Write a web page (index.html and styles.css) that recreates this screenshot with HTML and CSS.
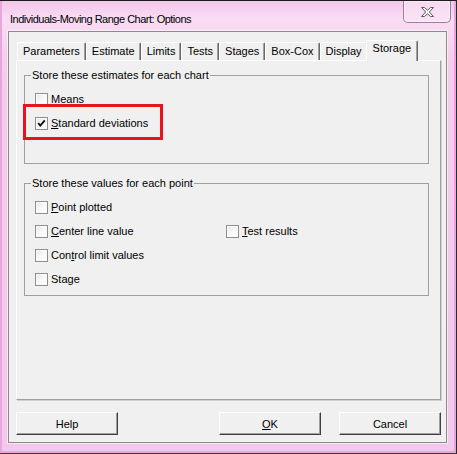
FILE: index.html
```html
<!DOCTYPE html>
<html>
<head>
<meta charset="utf-8">
<title>Individuals-Moving Range Chart: Options</title>
<link rel="stylesheet" href="styles.css">
</head>
<body>
<div class="window">
  <div class="titlebar">
    <div class="title">Individuals-Moving Range Chart: Options</div>
    <div class="close">
      <svg width="15" height="12" viewBox="0 0 15 12"><polygon points="1.5,1.5 4.5,1.5 7.5,4.2 10.5,1.5 13.5,1.5 9.3,6 13.5,10.5 10.5,10.5 7.5,7.8 4.5,10.5 1.5,10.5 5.7,6" fill="#f4f4f4" stroke="#5a5a5a" stroke-width="1" stroke-linejoin="round"/></svg>
    </div>
  </div>
  <div class="client">
    <div class="tabs">
      <div class="tab">Parameters</div>
      <div class="tab">Estimate</div>
      <div class="tab">Limits</div>
      <div class="tab">Tests</div>
      <div class="tab">Stages</div>
      <div class="tab">Box-Cox</div>
      <div class="tab">Display</div>
      <div class="tab active">Storage</div>
    </div>
    <div class="panel">
      <fieldset class="group group-chart">
        <legend>Store these estimates for each chart</legend>
        <div class="rows">
          <div class="cb"><span class="box"></span><span>Means</span></div>
          <div class="cb"><span class="box"><svg width="11" height="11" viewBox="0 0 11 11"><path d="M2.2 5.2 L4.3 7.6 L8.8 2.4" fill="none" stroke="#111" stroke-width="1.9"/></svg></span><span><u>S</u>tandard deviations</span></div>
          <div class="highlight"></div>
        </div>
      </fieldset>
      <fieldset class="group group-point">
        <legend>Store these values for each point</legend>
        <div class="grid">
          <div class="cb test"><span class="box"></span><span><u>T</u>est results</span></div>
          <div class="cb col1"><span class="box"></span><span><u>P</u>oint plotted</span></div>
          <div class="cb col1"><span class="box"></span><span><u>C</u>enter line value</span></div>
          <div class="cb col1"><span class="box"></span><span>Con<u>t</u>rol limit values</span></div>
          <div class="cb col1"><span class="box"></span><span>Sta<u>g</u>e</span></div>
        </div>
      </fieldset>
    </div>
    <div class="buttons">
      <button class="btn">Help</button>
      <div class="spacer"></div>
      <button class="btn"><u>O</u>K</button>
      <button class="btn">Cancel</button>
    </div>
  </div>
</div>
</body>
</html>
```

FILE: styles.css
```css
html, body {
  margin: 0;
  padding: 0;
  background: #ffffff;
}

body {
  font-family: "Liberation Sans", Arial, sans-serif;
  font-size: 11px;
  color: #000;
}

.window {
  box-sizing: border-box;
  width: 457px;
  height: 454px;
  padding: 0 9px 10px 8px;
  border-top: 1px solid #1c1c1c;
  border-right: 1px solid #2a2a2a;
  border-bottom: 1px solid #3a3a3a;
  background: linear-gradient(180deg, #f3c6eb 0px, #f9dcf4 18px, #f5ccee 60px, #f4c7ec 100%);
  box-shadow: inset 2px 0 0 #eaa5dc, inset -2px 0 0 #eaa5dc, inset 0 -2px 0 #eaa5dc;
  display: flex;
  flex-direction: column;
}

.titlebar {
  height: 30px;
  display: flex;
  justify-content: space-between;
  align-items: flex-start;
}

.title {
  margin-top: 11px;
  margin-left: 2px;
  line-height: 14px;
  letter-spacing: -0.5px;
  color: #000;
}

.close {
  box-sizing: border-box;
  width: 48px;
  height: 22px;
  margin-right: -4px;
  border: 1px solid #9b7f97;
  border-top: none;
  border-radius: 0 0 5px 5px;
  background: linear-gradient(180deg, rgba(255,255,255,0.35), rgba(255,255,255,0.15));
  box-shadow: inset 0 0 0 1px rgba(255,255,255,0.45);
  display: flex;
  align-items: center;
  justify-content: center;
}

.client {
  flex: 1;
  box-sizing: border-box;
  background: #f0f0f0;
  border: 1px solid #8a8a8a;
  box-shadow: 0 0 0 1px rgba(255,255,255,0.55);
  padding: 8px 5px 7px 7px;
  display: flex;
  flex-direction: column;
}

.tabs {
  display: flex;
  align-items: flex-end;
  height: 21px;
  margin-left: 1px;
  margin-bottom: -1px;
  position: relative;
  z-index: 1;
}

.tab {
  box-sizing: border-box;
  height: 18px;
  padding: 0 5px;
  line-height: 16px;
  border: 1px solid;
  border-bottom: none;
  border-color: #ffffff #696969 transparent #ffffff;
  border-radius: 2px 2px 0 0;
  box-shadow: inset -1px 0 0 #a0a0a0;
  background: #f0f0f0;
  margin-bottom: 1px;
  white-space: nowrap;
}

.tab.active {
  height: 21px;
  margin: 0 -2px 0 -2px;
  padding: 0 6px;
  line-height: 15px;
  position: relative;
  z-index: 2;
}

.panel {
  flex: 1;
  box-sizing: border-box;
  border: 1px solid;
  border-color: #ffffff #a0a0a0 #a0a0a0 #ffffff;
  box-shadow: 1px 1px 0 #d0d0d0;
  display: flex;
  flex-direction: column;
}

.group {
  margin: 8px 11px 0 7px;
  padding: 0 10px;
  border: 1px solid #a0a0a0;
  min-width: 0;
}

.group legend {
  margin-left: -4px;
  padding: 0 1px;
  line-height: 13px;
}

.group-chart {
  padding-top: 5px;
  padding-bottom: 28px;
}

.group-point {
  margin-top: 13px;
  padding-top: 5px;
  padding-bottom: 4px;
}

.rows {
  position: relative;
  display: flex;
  flex-direction: column;
}

.grid {
  display: grid;
  grid-template-columns: 191px 1fr;
}

.col1 {
  grid-column: 1;
}

.test {
  grid-column: 2;
  grid-row: 2;
}

.cb {
  height: 24px;
  display: flex;
  align-items: center;
  gap: 3px;
  white-space: nowrap;
}

.box {
  box-sizing: border-box;
  width: 13px;
  height: 13px;
  border: 1px solid #8e8f8f;
  background: linear-gradient(135deg, #e6e6e6 0%, #f8f8f8 50%, #ffffff 100%);
  box-shadow: inset 0 0 0 1px #fbfbfb;
  display: flex;
  align-items: center;
  justify-content: center;
  flex: none;
}

.box svg {
  display: block;
}

u {
  text-underline-offset: 1px;
}

.highlight {
  position: absolute;
  left: -12px;
  top: 17px;
  width: 140px;
  height: 36px;
  box-sizing: border-box;
  border: 3px solid #e8141c;
}

.buttons {
  display: flex;
  margin-top: 12px;
}

.spacer {
  flex: 1;
}

.btn {
  box-sizing: border-box;
  width: 102px;
  height: 23px;
  padding: 0;
  margin: 0;
  font-family: "Liberation Sans", Arial, sans-serif;
  font-size: 11px;
  color: #000;
  background: #f0f0f0;
  border: 1px solid;
  border-color: #ffffff #404040 #404040 #ffffff;
  box-shadow: inset -1px -1px 0 #a0a0a0;
}

.btn + .btn {
  margin-left: 18px;
}
```
